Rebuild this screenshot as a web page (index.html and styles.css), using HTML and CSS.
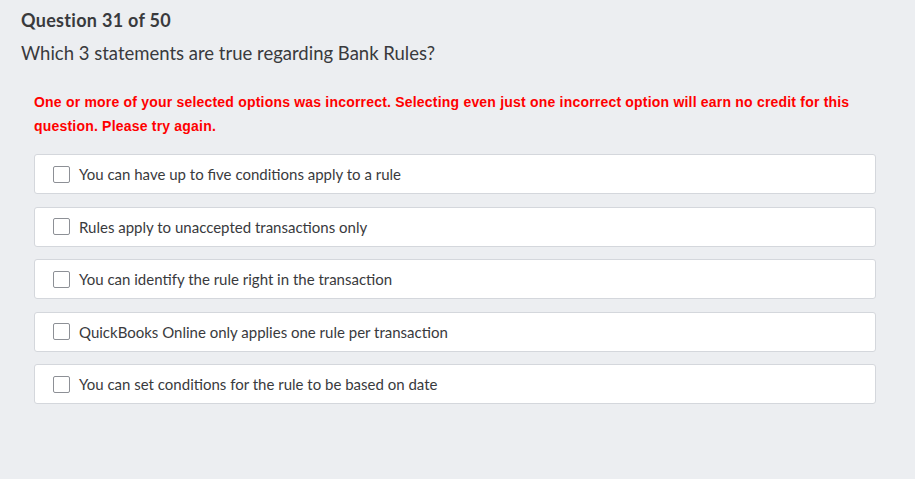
FILE: index.html
```html
<!DOCTYPE html>
<html>
<head>
<meta charset="utf-8">
<link rel="stylesheet" href="styles.css">
</head>
<body>
<div class="page">
  <h1 class="qnum">Question 31 of 50</h1>
  <p class="qtext">Which 3 statements are true regarding Bank Rules?</p>
  <div class="body">
    <p class="error">One or more of your selected options was incorrect. Selecting even just one incorrect option will earn no credit for this question. Please try again.</p>
    <div class="options">
      <label class="option"><span class="box"></span><span class="label">You can have up to five conditions apply to a rule</span></label>
      <label class="option"><span class="box"></span><span class="label">Rules apply to unaccepted transactions only</span></label>
      <label class="option"><span class="box"></span><span class="label">You can identify the rule right in the transaction</span></label>
      <label class="option"><span class="box"></span><span class="label">QuickBooks Online only applies one rule per transaction</span></label>
      <label class="option"><span class="box"></span><span class="label">You can set conditions for the rule to be based on date</span></label>
    </div>
  </div>
</div>
</body>
</html>
```
FILE: styles.css
```css
html, body {
  margin: 0;
  padding: 0;
  background: #eceef1;
  height: 100%;
}
body {
  font-family: Lato, "Noto Sans", sans-serif;
  color: #393a3d;
}
.page {
  padding: 9px 0 0 21px;
}
.qnum {
  margin: 0;
  font-size: 18px;
  font-weight: 700;
  line-height: 22px;
  letter-spacing: 0.3px;
}
.qtext {
  margin: 10px 0 0 0;
  font-size: 18.5px;
  line-height: 24px;
}
.body {
  padding: 0 39px 0 13px;
}
.error {
  margin: 25px 0 0 0;
  font-family: "Liberation Sans", Arial, sans-serif;
  font-weight: 700;
  font-size: 14px;
  line-height: 24px;
  letter-spacing: 0.2px;
  color: #ff0000;
}
.options {
  margin-top: 16px;
  display: flex;
  flex-direction: column;
  gap: 12.5px;
}
.option {
  display: flex;
  align-items: center;
  height: 38px;
  background: #fff;
  border: 1px solid #d4d7dc;
  border-radius: 3px;
  padding-left: 18px;
}
.box {
  width: 15px;
  height: 15px;
  border: 1px solid #8d9096;
  border-radius: 2px;
  background: #fff;
  flex: none;
}
.label {
  margin-left: 9px;
  font-size: 15px;
}
```
